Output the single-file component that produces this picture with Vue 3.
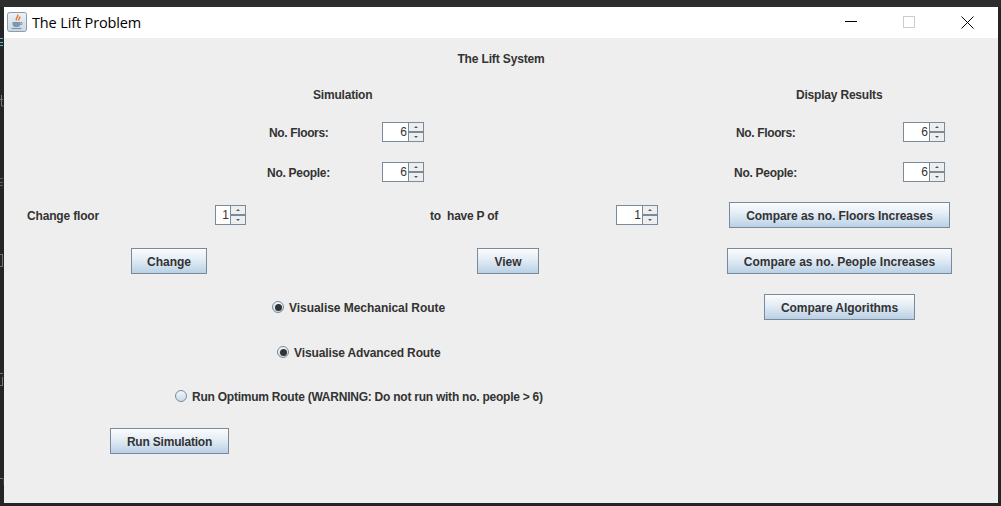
<script setup>
const floors = 6
const people = 6
</script>

<template>
  <div class="desktop">
    <svg class="strip" width="4" height="506" viewBox="0 0 4 506">
      <path d="M0 38.5h3M0 42.5h3M0 45.5h3" stroke="#62b5c4" fill="none" />
      <path d="M1.5 95v11M0 99.5h3M1.5 106h2" stroke="#77736c" fill="none" />
      <path d="M0 178.5h3M0 182.5h3M0 185.5h3" stroke="#5f5f5f" fill="none" />
      <path d="M0 254.5h3M0 266.5h3M2.5 254v13" stroke="#7a6f66" fill="none" />
      <path d="M0 373.5h3M0 385.5h3M2.5 377v9" stroke="#7a6f66" fill="none" />
      <path d="M0 478.5h3" stroke="#6a6f72" fill="none" />
      <path d="M3.5 478v7" stroke="#3c3c3c" fill="none" />
    </svg>
    <div class="window">
      <header class="titlebar">
        <svg class="appicon" width="20" height="20" viewBox="0 0 20 20">
          <defs>
            <linearGradient id="iconbg" x1="0" y1="0" x2="0" y2="1">
              <stop offset="0" stop-color="#eef2f6" />
              <stop offset="1" stop-color="#cbd8e4" />
            </linearGradient>
          </defs>
          <rect x="0.5" y="0.5" width="19" height="19" rx="2" fill="url(#iconbg)" stroke="#8a9bad" />
          <path d="M10.5 2.5c1.8 2.2-2.6 3.2-1 6M12.8 4.5c.6 1.6-1.8 2.4-.9 4" fill="none" stroke="#e8792b" stroke-width="1.5" />
          <path d="M5.5 10h8v2.5a3 3 0 0 1-3 2.5h-2a3 3 0 0 1-3-2.5z" fill="#7f97ae" />
          <path d="M13.5 10.5h1.5v2h-1.5" fill="none" stroke="#7f97ae" />
          <path d="M4.5 16.5h10" stroke="#7f97ae" stroke-width="1.2" />
        </svg>
        <span class="wintitle">The Lift Problem</span>
        <div class="winbtns">
          <svg width="12" height="13" viewBox="0 0 12 13"><path d="M0 5.5h12" stroke="#000" /></svg>
          <svg width="12" height="13" viewBox="0 0 12 13"><rect x="0.5" y="0.5" width="11" height="11" fill="none" stroke="#cccccc" /></svg>
          <svg width="13" height="13" viewBox="0 0 13 13"><path d="M0.5 0.5l12 12M12.5 0.5l-12 12" stroke="#000" fill="none" /></svg>
        </div>
      </header>

      <main class="content">
        <div class="row r-title"><span class="label">The Lift System</span></div>

        <div class="row r-heads">
          <span class="label sim">Simulation</span>
          <span class="label disp">Display Results</span>
        </div>

        <div class="row r-floors">
          <span class="label low w-floors">No. Floors:</span>
          <div class="spin s1"><span class="val">{{ floors }}</span><span class="arrows"><i class="up"></i><i class="down"></i></span></div>
          <span class="label low w-floors l2">No. Floors:</span>
          <div class="spin s2"><span class="val">{{ floors }}</span><span class="arrows"><i class="up"></i><i class="down"></i></span></div>
        </div>

        <div class="row r-people">
          <span class="label low w-people">No. People:</span>
          <div class="spin s1"><span class="val">{{ people }}</span><span class="arrows"><i class="up"></i><i class="down"></i></span></div>
          <span class="label low w-people l2">No. People:</span>
          <div class="spin s2"><span class="val">{{ people }}</span><span class="arrows"><i class="up"></i><i class="down"></i></span></div>
        </div>

        <div class="row r-change">
          <span class="label low c1">Change floor</span>
          <div class="spin small"><span class="val">1</span><span class="arrows"><i class="up"></i><i class="down"></i></span></div>
          <span class="label low c2">to&nbsp; have P of</span>
          <div class="spin small2"><span class="val">1</span><span class="arrows"><i class="up"></i><i class="down"></i></span></div>
          <button class="btn b-floors">Compare as no. Floors Increases</button>
        </div>

        <div class="row r-buttons">
          <button class="btn b-change">Change</button>
          <button class="btn b-view">View</button>
          <button class="btn b-people">Compare as no. People Increases</button>
        </div>

        <div class="row r-mech">
          <label class="radio"><span class="dot on"></span><span class="label low t-mech">Visualise Mechanical Route</span></label>
          <button class="btn b-algo">Compare Algorithms</button>
        </div>

        <div class="row r-adv">
          <label class="radio"><span class="dot on"></span><span class="label low t-adv">Visualise Advanced Route</span></label>
        </div>

        <div class="row r-opt">
          <label class="radio"><span class="dot"></span><span class="label low t-opt">Run Optimum Route (WARNING: Do not run with no. people &gt; 6)</span></label>
        </div>

        <div class="row r-run">
          <button class="btn b-run">Run Simulation</button>
        </div>
      </main>
    </div>
  </div>
</template>

<style>
html, body { margin: 0; background: #252526; }
</style>

<style scoped>
.desktop {
  width: 1001px;
  height: 506px;
  background: linear-gradient(#2d2d2d 7px, #252526 7px);
  box-sizing: border-box;
  padding: 7px 3px 3px 4px;
  position: relative;
  overflow: hidden;
}
.strip { position: absolute; left: 0; top: 0; }
.window {
  width: 994px;
  height: 496px;
  background: #eeeeee;
  display: flex;
  flex-direction: column;
  font-family: "Liberation Sans", Arial, sans-serif;
}
.titlebar {
  height: 31px;
  flex: none;
  box-sizing: border-box;
  background: #fff;
  display: flex;
  align-items: center;
  padding-left: 3px;
  padding-bottom: 1px;
}
.appicon { flex: none; }
.wintitle {
  margin-left: 5px;
  font: 14.5px "Open Sans", "Noto Sans", sans-serif;
  letter-spacing: -0.14px;
  color: #000;
}
.winbtns {
  margin-left: auto;
  padding-right: 24px;
  padding-top: 1px;
  display: flex;
  gap: 46px;
  align-items: flex-start;
}
.content { display: flex; flex-direction: column; flex: 1; }
.row {
  display: flex;
  align-items: center;
}
.label {
  font-size: 12px;
  font-weight: 700;
  color: #333333;
  white-space: nowrap;
  line-height: 14px;
  flex: none;
}
.label.low { padding-top: 2px; }
.r-title { height: 42px; justify-content: center; }
.r-title .label { letter-spacing: -0.14px; }
.r-heads { height: 31px; }
.sim { margin-left: 309px; width: 59px; letter-spacing: -0.2px; margin-bottom: 2px; }
.disp { margin-left: 424px; width: 87px; letter-spacing: -0.2px; margin-bottom: 2px; }
.w-floors { width: 59px; letter-spacing: -0.36px; }
.w-people { width: 63px; letter-spacing: -0.28px; }
.r-floors { height: 42px; padding-left: 265px; }
.r-floors .s1 { margin-left: 54px; }
.r-floors .l2 { margin-left: 312px; }
.r-floors .s2 { margin-left: 108px; }
.r-people { height: 38px; padding-left: 263px; }
.r-people .s1 { margin-left: 52px; }
.r-people .l2 { margin-left: 310px; }
.r-people .s2 { margin-left: 106px; }
.r-change { height: 48px; padding-left: 23px; }
.c1 { width: 72px; letter-spacing: -0.17px; }
.spin.small { margin-left: 116px; width: 31px; }
.c2 { margin-left: 184px; width: 69px; letter-spacing: -0.23px; }
.spin.small2 { margin-left: 117px; }
.b-floors { margin-left: 71px; width: 221px; letter-spacing: -0.07px; }
.r-buttons { height: 44px; }
.b-change { margin-left: 127px; width: 76px; }
.b-view { margin-left: 270px; width: 62px; }
.b-people { margin-left: 188px; width: 225px; }
.r-mech { height: 48px; }
.r-mech .radio { margin-left: 268px; width: 173px; }
.t-mech { letter-spacing: -0.04px; }
.t-adv { letter-spacing: -0.12px; }
.t-opt { letter-spacing: -0.24px; }
.b-algo { margin-left: 319px; width: 151px; letter-spacing: -0.06px; }
.r-adv { height: 42px; padding-left: 273px; }
.r-opt { height: 46px; padding-left: 171px; }
.r-run { height: 44px; padding-left: 106px; }
.b-run { width: 119px; letter-spacing: -0.2px; }

.btn {
  height: 26px;
  padding: 2px 0 0;
  box-sizing: border-box;
  border: 1px solid #7a8a99;
  background: linear-gradient(#fbfcfe 0%, #e6eef6 40%, #c9dbec 80%, #b8cfe5 100%);
  font: 700 12px "Liberation Sans", Arial, sans-serif;
  color: #333333;
  flex: none;
}
.spin {
  width: 42px;
  height: 20px;
  flex: none;
  box-sizing: border-box;
  display: flex;
  border-top: 1px solid #7a8a99;
  border-left: 1px solid #7a8a99;
  background: linear-gradient(#fff 18px, #eeeeee 18px);
}
.val {
  flex: 1;
  text-align: right;
  padding-right: 1px;
  padding-top: 1px;
  font: 12px/17px "Liberation Sans", Arial, sans-serif;
  color: #333333;
  height: 17px;
  box-sizing: content-box;
  border-bottom: 1px solid #7a8a99;
}
.arrows {
  width: 16px;
  flex: none;
  display: flex;
  flex-direction: column;
  box-sizing: border-box;
  border: 1px solid #7a8a99;
  border-top: 0;
  background: #eeeeee;
}
.arrows i {
  flex: 1;
  display: flex;
  align-items: center;
  justify-content: center;
  background: #eeeeee;
}
.arrows .up { border-bottom: 2px solid #7a8a99; }
.arrows i::after {
  content: "";
  width: 0;
  height: 0;
  border-left: 2px solid transparent;
  border-right: 2px solid transparent;
}
.arrows .up::after { border-bottom: 2px solid #4a5a68; }
.arrows .down::after { border-top: 2px solid #4a5a68; }

.radio { display: flex; align-items: center; gap: 5px; }
.dot {
  width: 12px;
  height: 12px;
  flex: none;
  box-sizing: border-box;
  border-radius: 50%;
  border: 1px solid #7a8a99;
  background: linear-gradient(#f2f6fa, #c9dbec);
  display: flex;
  align-items: center;
  justify-content: center;
}
.dot.on::after {
  content: "";
  width: 7px;
  height: 7px;
  border-radius: 50%;
  background: #333333;
}
</style>
